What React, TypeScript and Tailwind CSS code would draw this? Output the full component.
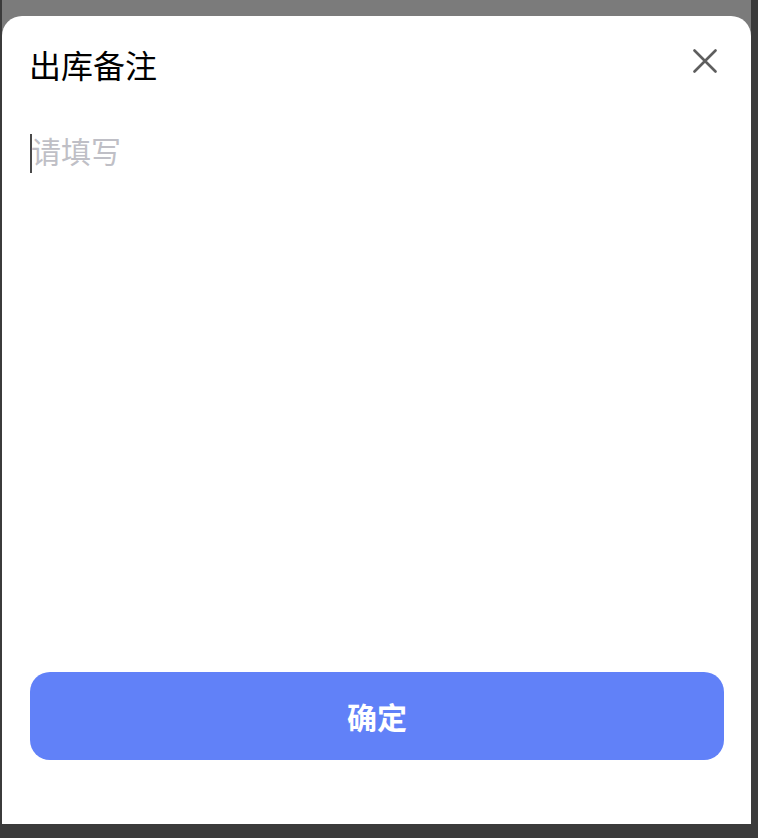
export default function App() {
  return (
    <div
      className="w-[758px] h-[838px] bg-[#3b3b3b] pl-[2px] pr-[7px] pb-[14px] flex flex-col"
      style={{ fontFamily: '"Noto Sans CJK SC", "Noto Sans", sans-serif' }}
    >
      {/* dimmed page behind the sheet */}
      <div className="flex-1 bg-[#7b7b7b] pt-[16px] flex flex-col">
        <div className="flex-1 bg-white rounded-t-[20px] flex flex-col">
          {/* Header */}
          <div className="flex items-center justify-between pl-[27px] pr-[34px] pt-[33px] h-[63px]">
            <span className="text-[32px] leading-[30px] text-black">出库备注</span>
            <svg className="w-[24px] h-[24px] mb-[6px] text-[#5e5e5e]" viewBox="0 0 24 24" fill="none" stroke="currentColor">
              <path strokeWidth={2.6} strokeLinecap="round" d="M1.5 1.5l21 21M22.5 1.5l-21 21" />
            </svg>
          </div>

          {/* Input */}
          <div className="flex-1 pl-[28px] pt-[55px]">
            <div className="flex items-center h-[39px]">
              <span className="w-[2px] h-[39px] bg-[#4a4a4a]" />
              <span className="text-[30px] leading-[39px] mb-[6px] -ml-[1px] text-[#bfbfc6]">请填写</span>
            </div>
          </div>

          {/* Confirm */}
          <div className="pl-[28px] pr-[27px] pb-[64px]">
            <button className="w-full h-[88px] rounded-[20px] bg-[#6181f8] text-white text-[30px] font-bold flex items-center justify-center">
              确定
            </button>
          </div>
        </div>
      </div>
    </div>
  )
}
